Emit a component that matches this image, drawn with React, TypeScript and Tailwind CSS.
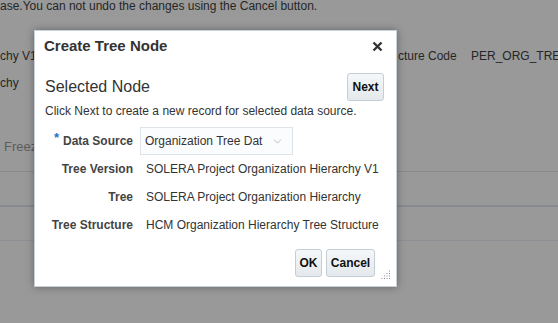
import { ChevronDown } from 'lucide-react';

const rows = [
  { label: 'Tree Version', value: 'SOLERA Project Organization Hierarchy V1' },
  { label: 'Tree', value: 'SOLERA Project Organization Hierarchy' },
  { label: 'Tree Structure', value: 'HCM Organization Hierarchy Tree Structure' },
];

function CloseIcon() {
  return (
    <svg width="11" height="11" viewBox="0 0 11 11">
      <path d="M1.5 1.5 L9.5 9.5 M9.5 1.5 L1.5 9.5" stroke="#333" strokeWidth="2.4" strokeLinecap="butt" />
    </svg>
  );
}

function ResizeGrip() {
  const dots: [number, number][] = [];
  for (let r = 0; r < 4; r++) {
    for (let c = 3 - r; c < 4; c++) {
      dots.push([c * 2.5 + 0.5, r * 2.5 + 0.5]);
    }
  }
  return (
    <svg width="10" height="10" viewBox="0 0 10 10">
      {dots.map(([x, y], i) => (
        <rect key={i} x={x} y={y} width="1" height="1" fill="#8a8f94" />
      ))}
    </svg>
  );
}

function Button({ children, className }: { children: React.ReactNode; className?: string }) {
  return (
    <button
      type="button"
      className={`h-[28px] rounded-[3px] border border-[#c4ced7] bg-gradient-to-b from-[#f5f7f9] to-[#e4e9ed] text-[12px] font-bold text-[#111] ${className ?? ''}`}
    >
      {children}
    </button>
  );
}

function App() {
  return (
    <div className="relative h-[323px] w-[558px] overflow-hidden bg-[#999999] font-['Liberation_Sans',Arial,sans-serif] text-[12px] text-[#262626]">
      {/* page behind the modal */}
      <div className="flex flex-col">
        <div className="h-[13px] leading-[13px]">ase.You can not undo the changes using the Cancel button.</div>
        <div className="mt-[36px] flex h-[14px] items-center whitespace-nowrap leading-[14px]">
          <span className="w-[398px] shrink-0">chy V1</span>
          <span className="w-[73px] shrink-0">cture Code</span>
          <span className="shrink-0">PER_ORG_TRE</span>
        </div>
        <div className="mt-[13px] h-[14px] leading-[14px]">chy</div>
        <div className="mt-[49px] pl-[4px] text-[13px] leading-[15px] text-[#5d5d5d]">Freez</div>
        <div className="mt-[17px] h-px bg-[#868a8e]" />
        <div className="mt-[33px] h-[2px] bg-[#868a8e]" />
        <div className="mt-[33px] h-px bg-[#8c9094]" />
      </div>

      {/* modal */}
      <div className="absolute left-[34px] top-[30px] flex h-[257px] w-[363px] flex-col border border-[#c8d0d8] bg-white shadow-[0_0_8px_rgba(0,0,0,0.35)]">
        <div className="flex h-[30px] items-center justify-between pl-[9px] pr-[13px] pt-[1px]">
          <h1 className="text-[15px] font-bold text-[#333]">Create Tree Node</h1>
          <CloseIcon />
        </div>

        <div className="mt-[12px] flex h-[28px] items-center justify-between pl-[10px] pr-[12px]">
          <h2 className="text-[16px] text-[#333]">Selected Node</h2>
          <Button className="w-[37px]">Next</Button>
        </div>

        <p className="mt-[3px] pl-[10px] leading-[15px] text-[#333]">
          Click Next to create a new record for selected data source.
        </p>

        <div className="mt-[8px] grid grid-cols-[98px_1fr] gap-x-[7px]">
          <div className="flex h-[28px] items-center justify-end gap-[4px] font-bold text-[#444]">
            <span className="-mt-[6px] text-[13px] text-[#1a73c9]">*</span>
            <span>Data Source</span>
          </div>
          <div className="flex h-[28px] items-center">
            <div className="flex h-[28px] w-[153px] items-center justify-between border border-[#dde3e8] bg-[#fbfcfd] pl-[4px] pr-[8px] text-[#333]">
              <span>Organization Tree Dat</span>
              <ChevronDown size={13} strokeWidth={1.2} color="#9aa0a6" />
            </div>
          </div>
          {rows.map(row => (
            <div key={row.label} className="contents">
              <div className="flex h-[28px] items-center justify-end font-bold text-[#444]">{row.label}</div>
              <div className="flex h-[28px] items-center pl-[6px] text-[#333]">{row.value}</div>
            </div>
          ))}
        </div>

        <div className="mt-[10px] flex items-start justify-end gap-[4px] pr-[21px]">
          <Button className="w-[27px]">OK</Button>
          <Button className="w-[49px]">Cancel</Button>
        </div>
        <div className="absolute bottom-[6px] right-[5px]">
          <ResizeGrip />
        </div>
      </div>
    </div>
  );
}

export default App;
